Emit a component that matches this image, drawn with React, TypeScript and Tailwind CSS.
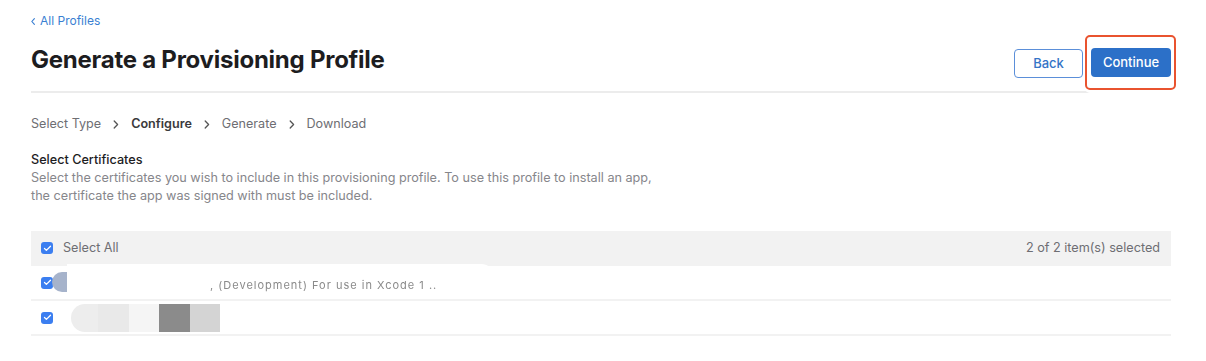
import { Check } from "lucide-react";

const FONT = "font-['Inter','Noto_Sans',sans-serif]";

function Box() {
  return (
    <span className="flex h-[12px] w-[12px] shrink-0 items-center justify-center rounded-[3px] bg-[#3b7ef0]">
      <Check className="h-[9px] w-[9px] text-white" strokeWidth={3.5} />
    </span>
  );
}

function Chevron() {
  return (
    <svg width="6" height="9" viewBox="0 0 6 9" className="mx-[12px] shrink-0">
      <path d="M1.2 1l3.4 3.5-3.4 3.5" fill="none" stroke="#555" strokeWidth="1.3" strokeLinecap="round" strokeLinejoin="round" />
    </svg>
  );
}

export default function App() {
  return (
    <div className={`${FONT} min-h-[361px] w-[1206px] bg-white pl-[31px] antialiased`}>
      <div className="w-[1140px]">
        {/* Back link */}
        <a className="mt-[13px] flex h-[16px] items-center gap-[5px] text-[12px] leading-[16px] text-[#3a7fd2]">
          <svg width="4" height="7" viewBox="0 0 4 7">
            <path d="M3.4 0.6L0.9 3.5l2.5 2.9" fill="none" stroke="#3a7fd2" strokeWidth="1.1" strokeLinecap="round" />
          </svg>
          All Profiles
        </a>

        {/* Header */}
        <div className="mt-[15px] flex items-start justify-between">
          <h1 className="text-[24px] font-bold leading-[32px] tracking-[-0.25px] text-[#1d1d1f]">
            Generate a Provisioning Profile
          </h1>
          <div className="mt-[4px] flex items-start gap-[8px]">
            <button className="mt-[1px] h-[29px] w-[69px] rounded-[4px] border border-[#5b8fd9] bg-white text-[13px] font-medium text-[#3474c7]">
              Back
            </button>
            <div className="relative">
              <button className="h-[29px] w-[80px] rounded-[4px] bg-[#2c70c8] text-[13px] font-medium text-white">
                Continue
              </button>
              <div className="pointer-events-none absolute -top-[13px] -bottom-[13px] -left-[6px] -right-[5px] rounded-[5px] border-2 border-[#e9532f] shadow-[0_3px_0_0_white]" />
            </div>
          </div>
        </div>

        <div className="mt-[13px] h-[2px] bg-[#ececec]" />

        {/* Steps */}
        <div className="mt-[22px] flex h-[18px] items-center text-[12.6px] leading-[18px] text-[#6e6e73]">
          <span>Select Type</span>
          <Chevron />
          <span className="font-semibold text-[#3a3a3c]">Configure</span>
          <Chevron />
          <span>Generate</span>
          <Chevron />
          <span>Download</span>
        </div>

        {/* Section */}
        <div className="mt-[18px] text-[12.65px] leading-[18px]">
          <h2 className="font-medium text-[#1d1d1f]">Select Certificates</h2>
          <p className="text-[#86868b]">
            Select the certificates you wish to include in this provisioning profile. To use this profile to install an app,
            <br />
            the certificate the app was signed with must be included.
          </p>
        </div>

        {/* Table */}
        <div className="mt-[26px]">
          <div className="flex h-[35px] items-center justify-between bg-[#f2f2f2] pl-[10px] pr-[11px] text-[12.65px] text-[#6e6e73]">
            <div className="flex items-center gap-[10px]">
              <Box />
              <span>Select All</span>
            </div>
            <span>2 of 2 item(s) selected</span>
          </div>

          <div className="relative flex h-[35px] items-center border-b-2 border-[#f2f2f2] pl-[10px]">
            <Box />
            {/* redaction */}
            <div className="absolute left-[21px] top-[-2px] flex h-[28px] w-[443px] items-stretch">
              <div className="mt-[8px] h-[20px] w-[15px] rounded-l-full bg-[#a6b3cb]" />
              <div className="relative flex-1 rounded-r-[14px] bg-white">
                <span className="absolute left-[143px] top-[16px] whitespace-nowrap text-[11px] leading-[10px] tracking-[1px] text-[#8a8a8a] blur-[0.5px]">
                  , (Development) For use in Xcode 1 ..
                </span>
              </div>
            </div>
          </div>

          <div className="flex h-[35px] items-center border-b-2 border-[#f2f2f2] pl-[10px]">
            <Box />
            <div className="ml-[18px] flex h-[28px]">
              <div className="w-[27px] rounded-l-full bg-[#ededed]" />
              <div className="w-[31px] bg-[#e9e9e9]" />
              <div className="w-[30px] bg-[#f5f5f5]" />
              <div className="w-[31px] bg-[#8b8b8b]" />
              <div className="w-[30px] bg-[#d4d4d4]" />
            </div>
          </div>
        </div>
      </div>
    </div>
  );
}
